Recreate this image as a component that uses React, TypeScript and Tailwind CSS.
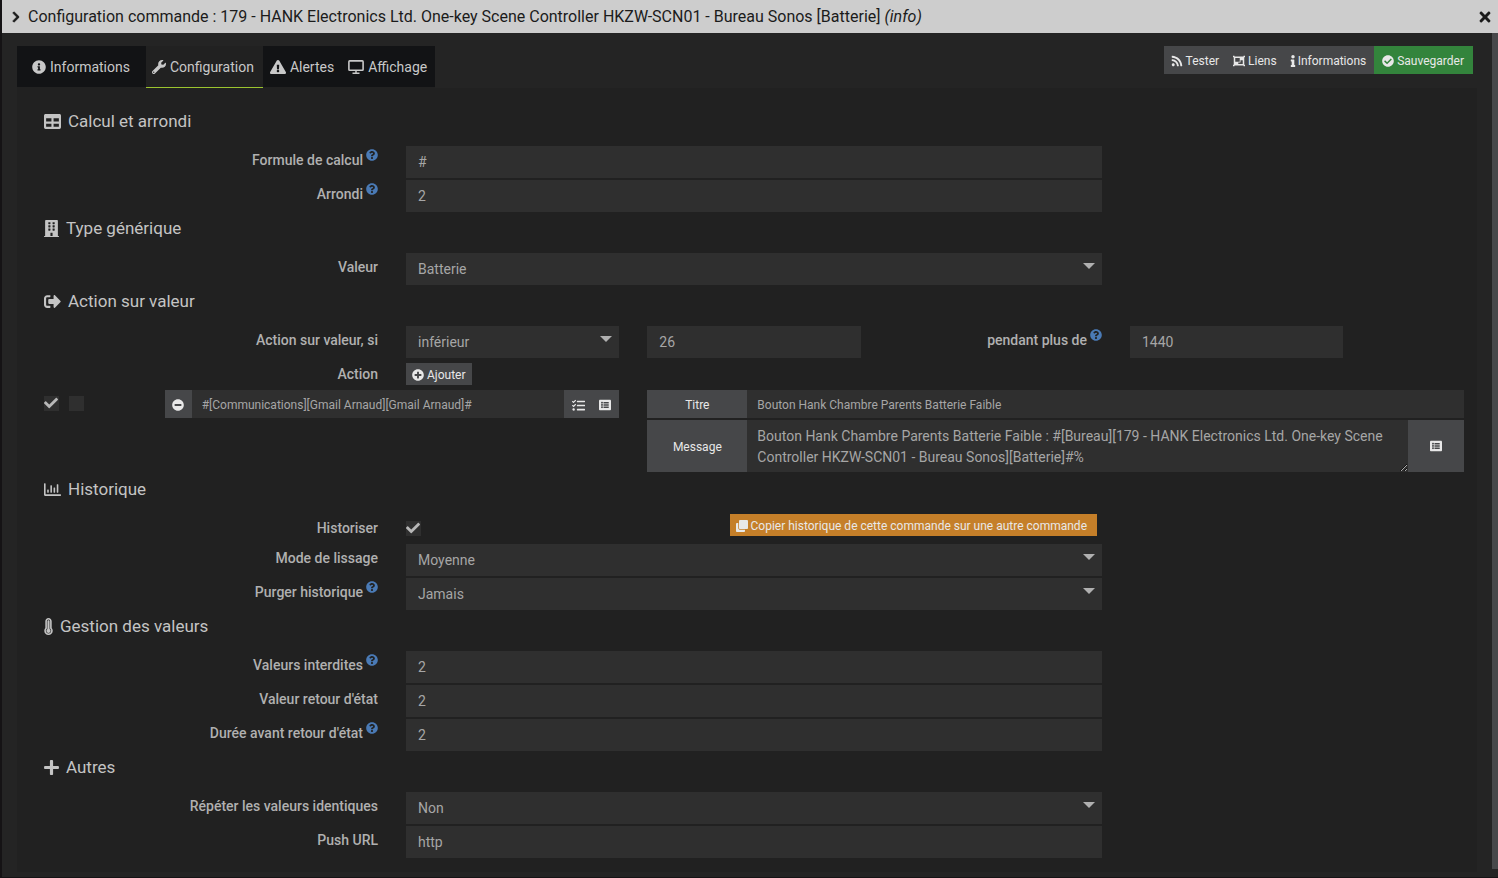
import { ReactNode } from "react";
import clsx from "clsx";
import {
  FaBuilding,
  FaCheck,
  FaCheckCircle,
  FaChevronRight,
  FaClone,
  FaExclamationTriangle,
  FaInfo,
  FaInfoCircle,
  FaListAlt,
  FaMinusCircle,
  FaObjectGroup,
  FaPlus,
  FaPlusCircle,
  FaQuestionCircle,
  FaRegChartBar,
  FaRss,
  FaSignOutAlt,
  FaTable,
  FaTasks,
  FaThermometerFull,
  FaTimes,
  FaWrench,
} from "react-icons/fa";

const DisplayIcon = () => (
  <svg viewBox="0 0 16 14" className="h-[14px] w-4" fill="none" stroke="currentColor">
    <rect x="0.9" y="0.9" width="14.2" height="9.4" rx="0.8" strokeWidth="1.6" />
    <path d="M8 10.5v2.4M4.5 13.2h7" strokeWidth="1.5" />
  </svg>
);

type TTab = { label: string; icon: ReactNode; active?: boolean; className: string };

const tabs: TTab[] = [
  { label: "Informations", icon: <FaInfoCircle size={14} />, className: "pl-[15px] pr-4" },
  {
    label: "Configuration",
    icon: <FaWrench size={14} />,
    active: true,
    className: "pl-1.5 pr-[9px]",
  },
  {
    label: "Alertes",
    icon: <FaExclamationTriangle size={16} />,
    className: "px-[7px]",
  },
  { label: "Affichage", icon: <DisplayIcon />, className: "pl-[7px] pr-2" },
];

const Legend = ({ icon, children }: { icon: ReactNode; children: ReactNode }) => (
  <h2 className="mb-[11px] flex h-7 items-center gap-[7px] text-[17px] text-[#c4c4c4]">
    {icon}
    {children}
  </h2>
);

type TLabelProps = {
  htmlFor: string;
  help?: boolean;
  className?: string;
  children: ReactNode;
};

const Label = ({ htmlFor, help, className, children }: TLabelProps) => (
  <label
    htmlFor={htmlFor}
    className={clsx(
      "flex items-start justify-end gap-[3px] pt-1 font-medium leading-5 text-[#b0b0b0]",
      className || "col-span-3"
    )}
  >
    {children}
    {help && <FaQuestionCircle size={12} className="-mt-px text-[#4a7ab5]" />}
  </label>
);

const Row = ({ children }: { children: ReactNode }) => (
  <div className="mb-0.5 grid grid-cols-12 gap-x-7">{children}</div>
);

const fieldStyle = "h-8 w-full bg-[#2f2f2f] px-3 text-sm text-[#a6a6a6] outline-none";

const TextField = ({ id, value }: { id: string; value: string }) => (
  <input id={id} type="text" defaultValue={value} className={fieldStyle} />
);

const SelectField = ({ id, value }: { id: string; value: string }) => (
  <div className="relative">
    <select id={id} className={clsx(fieldStyle, "block appearance-none")}>
      <option>{value}</option>
    </select>
    <span className="pointer-events-none absolute right-[7px] top-[10px] border-x-6 border-t-6 border-x-transparent border-t-[#b0b0b0]"></span>
  </div>
);

type TField = {
  id: string;
  label: string;
  value: string;
  help?: boolean;
  select?: boolean;
};

const FieldRow = ({ id, label, value, help, select }: TField) => (
  <Row>
    <Label htmlFor={id} help={help}>
      {label}
    </Label>
    <div className="col-span-6">
      {select ? <SelectField id={id} value={value} /> : <TextField id={id} value={value} />}
    </div>
  </Row>
);

const Checkbox = ({ id, label, checked }: { id?: string; label?: string; checked?: boolean }) => (
  <span className="relative block size-[15px]">
    <input
      id={id}
      type="checkbox"
      aria-label={label}
      defaultChecked={checked}
      className="peer block size-[15px] appearance-none bg-[#2f2f2f]"
    />
    <FaCheck
      size={14}
      className="pointer-events-none absolute left-0 top-0 hidden text-[#b8b8b8] peer-checked:block"
    />
  </span>
);

const toolButton = "flex h-7 items-center gap-[3px] pt-0.5 text-xs text-[#e8e8e8]";

const App = () => {
  return (
    <div className="min-h-screen border-b border-l-2 border-[#151315] bg-[#242424] font-[Roboto,sans-serif] text-sm">
      <header className="flex h-[33px] items-center bg-[#cdcdcd] pl-2 pr-[5px] text-base text-[#1b1b1b]">
        <FaChevronRight size={12} stroke="currentColor" strokeWidth={30} />
        <h1 className="ml-1.5 flex-1">
          Configuration commande : 179 - HANK Electronics Ltd. One-key Scene Controller
          HKZW-SCN01 - Bureau Sonos [Batterie] <em>(info)</em>
        </h1>
        <button aria-label="Fermer">
          <FaTimes size={16} />
        </button>
      </header>

      <div className="flex">
        <main className="flex-1 pb-[5px] pl-[15px] pr-[15px] pt-[13px]">
          <div className="flex items-start justify-between pr-1">
            <nav className="flex bg-[#121315] text-[#c8c8c8]">
              {tabs.map((tab) => (
                <a
                  key={tab.label}
                  href="#"
                  className={clsx(
                    "flex h-[42px] items-center gap-1 border-b pt-px text-sm",
                    tab.active ? "border-[#9bc42f] bg-[#212121]" : "border-[#212121]",
                    tab.className
                  )}
                >
                  {tab.icon}
                  {tab.label}
                </a>
              ))}
            </nav>
            <div className="flex bg-[#464749]">
              <button className={clsx(toolButton, "px-[7px]")}>
                <FaRss size={12} />
                Tester
              </button>
              <button className={clsx(toolButton, "pl-[7px] pr-2")}>
                <FaObjectGroup size={12} />
                Liens
              </button>
              <button className={clsx(toolButton, "pl-1.5 pr-2")}>
                <FaInfo size={12} className="-mx-1" />
                Informations
              </button>
              <button className={clsx(toolButton, "bg-[#33843c] pl-2 pr-[9px]")}>
                <FaCheckCircle size={12} />
                Sauvegarder
              </button>
            </div>
          </div>

          <form className="bg-[#212121] pb-3 pl-[27px] pr-[13px] pt-[19px]">
            <Legend icon={<FaTable size={17} />}>Calcul et arrondi</Legend>
            <FieldRow id="formule" label="Formule de calcul" value="#" help />
            <FieldRow id="arrondi" label="Arrondi" value="2" help />

            <Legend icon={<FaBuilding size={17} className="-mx-px" />}>Type générique</Legend>
            <FieldRow id="generique" label="Valeur" value="Batterie" select />

            <Legend icon={<FaSignOutAlt size={17} />}>Action sur valeur</Legend>
            <Row>
              <Label htmlFor="condition">Action sur valeur, si</Label>
              <div className="col-span-2">
                <SelectField id="condition" value="inférieur" />
              </div>
              <div className="col-span-2">
                <input
                  type="text"
                  aria-label="Seuil"
                  defaultValue="26"
                  className={fieldStyle}
                />
              </div>
              <Label htmlFor="duree" help className="col-span-2">
                pendant plus de
              </Label>
              <div className="col-span-2">
                <TextField id="duree" value="1440" />
              </div>
            </Row>
            <div className="grid h-[30px] grid-cols-12 gap-x-7">
              <Label htmlFor="ajouter">Action</Label>
              <div className="col-span-6 pt-[3px]">
                <button
                  id="ajouter"
                  type="button"
                  className="flex h-[22px] items-center gap-[3px] bg-[#464749] px-1.5 pt-0.5 text-xs text-[#e8e8e8]"
                >
                  <FaPlusCircle size={12} />
                  Ajouter
                </button>
              </div>
            </div>

            <Row>
              <div className="flex gap-[10px] pt-1.5">
                <Checkbox label="Activer l'action" checked />
                <Checkbox label="Exécuter en parallèle" />
              </div>
              <div className="col-span-4 flex h-7 text-xs">
                <button
                  type="button"
                  aria-label="Supprimer"
                  className="flex w-[27px] items-center justify-center bg-[#464749] pt-0.5 text-[#e8e8e8]"
                >
                  <FaMinusCircle size={12} />
                </button>
                <input
                  type="text"
                  aria-label="Commande"
                  defaultValue="#[Communications][Gmail Arnaud][Gmail Arnaud]#"
                  className="min-w-0 flex-1 bg-[#2f2f2f] px-[10px] pt-0.5 text-[#a6a6a6] outline-none"
                />
                <div className="flex bg-[#464749] pt-0.5 text-[#e8e8e8]">
                  <button type="button" aria-label="Actions" className="w-7 pl-2">
                    <FaTasks size={13} />
                  </button>
                  <button type="button" aria-label="Commandes" className="w-[27px] pl-[7px]">
                    <FaListAlt size={12} />
                  </button>
                </div>
              </div>
              <div className="col-span-7 flex flex-col gap-0.5 text-xs text-[#e8e8e8]">
                <div className="flex h-7">
                  <label
                    htmlFor="titre"
                    className="flex w-[100px] items-center justify-center bg-[#464749] pt-0.5"
                  >
                    Titre
                  </label>
                  <input
                    id="titre"
                    type="text"
                    defaultValue="Bouton Hank Chambre Parents Batterie Faible"
                    className="flex-1 bg-[#2f2f2f] px-[10px] pt-0.5 text-[#a6a6a6] outline-none"
                  />
                </div>
                <div className="flex">
                  <label
                    htmlFor="message"
                    className="flex w-[100px] items-center justify-center bg-[#464749] pt-0.5"
                  >
                    Message
                  </label>
                  <textarea
                    id="message"
                    rows={2}
                    defaultValue="Bouton Hank Chambre Parents Batterie Faible : #[Bureau][179 - HANK Electronics Ltd. One-key Scene Controller HKZW-SCN01 - Bureau Sonos][Batterie]#%"
                    className="h-[52px] flex-1 bg-[#2f2f2f] px-[10px] pb-1 pt-1.5 text-sm leading-[21px] text-[#a6a6a6] outline-none"
                  ></textarea>
                  <button
                    type="button"
                    aria-label="Choisir une commande"
                    className="flex w-14 items-center justify-center bg-[#464749]"
                  >
                    <FaListAlt size={12} />
                  </button>
                </div>
              </div>
            </Row>

            <div className="pt-px">
              <Legend icon={<FaRegChartBar size={17} />}>Historique</Legend>
            </div>
            <div className="grid h-[30px] grid-cols-12 gap-x-7">
              <Label htmlFor="historiser">Historiser</Label>
              <div className="col-span-6 flex items-start justify-between pr-[5px]">
                <div className="pt-[7px]">
                  <Checkbox id="historiser" checked />
                </div>
                <button
                  type="button"
                  className="flex h-[22px] items-center gap-[3px] bg-[#c57f29] pl-1.5 pr-2.5 pt-0.5 text-xs text-[#e8e8e8]"
                >
                  <FaClone size={12} />
                  Copier historique de cette commande sur une autre commande
                </button>
              </div>
            </div>
            <FieldRow id="lissage" label="Mode de lissage" value="Moyenne" select />
            <FieldRow id="purger" label="Purger historique" value="Jamais" help select />

            <Legend icon={<FaThermometerFull size={17} className="-mx-1" />}>
              Gestion des valeurs
            </Legend>
            <FieldRow id="interdites" label="Valeurs interdites" value="2" help />
            <FieldRow id="retour" label="Valeur retour d'état" value="2" />
            <FieldRow id="avant" label="Durée avant retour d'état" value="2" help />

            <Legend icon={<FaPlus size={17} className="-mx-px" />}>Autres</Legend>
            <FieldRow id="repeter" label="Répéter les valeurs identiques" value="Non" select />
            <FieldRow id="push" label="Push URL" value="http" />
          </form>
        </main>
        <div className="mb-2 w-1.5 bg-[#47484a]"></div>
      </div>
    </div>
  );
};

export default App;
